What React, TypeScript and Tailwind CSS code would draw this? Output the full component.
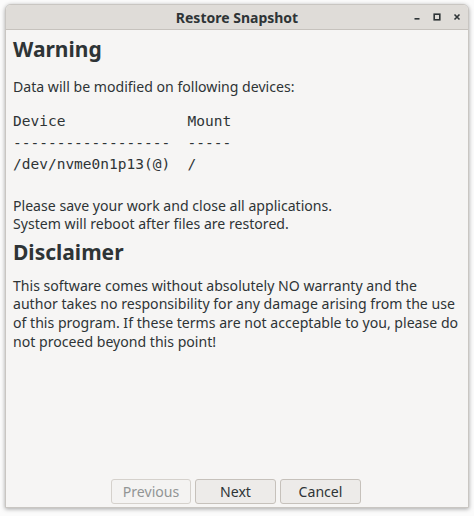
import React from 'react';

const mono = { fontFamily: '"DejaVu Sans Mono", monospace' };

const WindowButtons: React.FC = () => (
  <div className="absolute right-[7px] top-0 flex h-full items-center gap-[12px] text-[#2e3436]">
    <svg width="8" height="8" viewBox="0 0 8 8">
      <rect x="1.5" y="5" width="5" height="1.6" fill="currentColor" />
    </svg>
    <svg width="8" height="8" viewBox="0 0 8 8">
      <rect x="1.2" y="1.2" width="5.6" height="5.6" fill="none" stroke="currentColor" strokeWidth="1.6" />
    </svg>
    <svg width="8" height="8" viewBox="0 0 8 8">
      <path d="M1.5 1.5 L6.5 6.5 M6.5 1.5 L1.5 6.5" stroke="currentColor" strokeWidth="1.6" />
    </svg>
  </div>
);

const App: React.FC = () => {
  return (
    <div className="h-[516px] w-[474px] bg-[#fbfbfb] pl-[5px] pt-[4px]" style={{ fontFamily: '"Noto Sans", sans-serif' }}>
      <div className="flex h-[504px] w-[464px] flex-col overflow-hidden rounded-t-[6px] border border-[#c9c6c2] bg-[#f6f5f4] shadow-[0_1px_4px_rgba(0,0,0,0.35)]">
        <div className="relative flex h-[25px] shrink-0 items-center justify-center border-b border-[#c6c2bd] bg-[#dfdcd8]">
          <span className="text-[14px] font-bold text-[#2e3436]">Restore Snapshot</span>
          <WindowButtons />
        </div>

        <div className="flex flex-1 flex-col px-[7px] text-[#2e3436]">
          <h1 className="mt-[4px] text-[21px] font-bold leading-[30px]">Warning</h1>
          <p className="mt-[13px] text-[14.1px] leading-[19px]">Data will be modified on following devices:</p>

          <pre className="mt-[15px] text-[14.5px] leading-[21.5px]" style={mono}>
{`Device              Mount
------------------  -----
/dev/nvme0n1p13(@)  /`}
          </pre>

          <p className="mt-[21px] text-[14.1px] leading-[18px]">
            Please save your work and close all applications.
            <br />
            System will reboot after files are restored.
          </p>

          <h1 className="mt-[4px] text-[21px] font-bold leading-[30px]">Disclaimer</h1>
          <p className="mt-[10px] text-[14.1px] leading-[18.7px]">
            This software comes without absolutely NO warranty and the author takes no responsibility for any damage arising from
            the use of this program. If these terms are not acceptable to you, please do not proceed beyond this point!
          </p>

          <div className="mt-auto mb-[3px] flex justify-center gap-[4px] pr-[2px]">
            <button className="h-[25px] w-[80px] rounded-[3px] border border-[#d5d1cc] bg-[#f4f3f2] text-[14.1px] text-[#929595]">
              Previous
            </button>
            <button className="h-[25px] w-[81px] rounded-[3px] border border-[#c6c1bb] bg-[#edebe9] text-[14.1px] text-[#2e3436]">
              Next
            </button>
            <button className="h-[25px] w-[81px] rounded-[3px] border border-[#c6c1bb] bg-[#edebe9] text-[14.1px] text-[#2e3436]">
              Cancel
            </button>
          </div>
        </div>
      </div>
    </div>
  );
};

export default App;
